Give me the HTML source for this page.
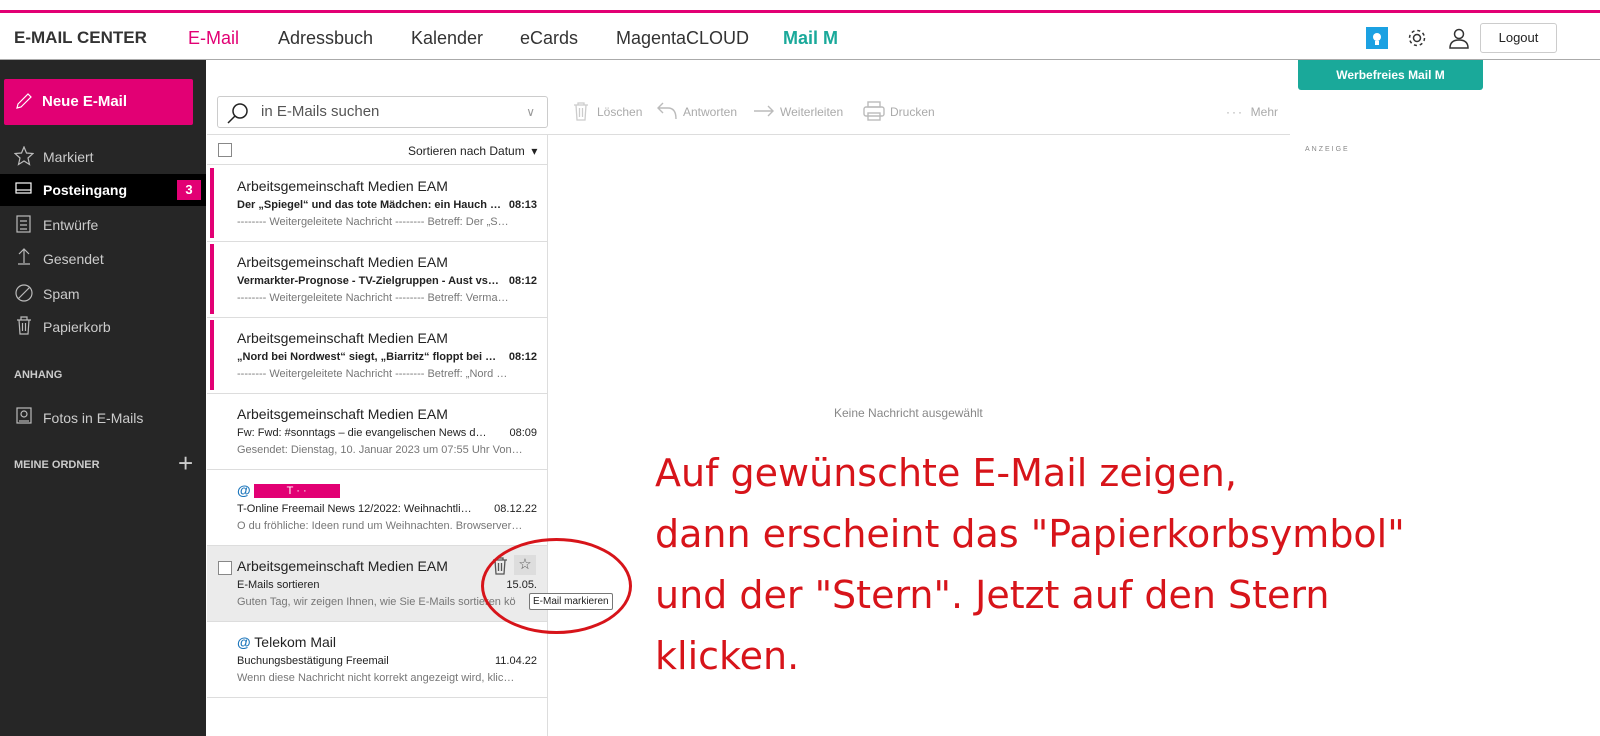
<!DOCTYPE html>
<html><head><meta charset="utf-8"><style>
*{margin:0;padding:0;box-sizing:border-box}
body{width:1600px;height:736px;overflow:hidden;background:#fff;font-family:"Liberation Sans",sans-serif;position:relative;color:#222}
.abs{position:absolute}
.nav{top:28px;font-size:18px;color:#333}
.side{left:0;top:60px;width:206px;height:676px;background:#262626}
.si{position:absolute;left:0;width:206px;height:32px;color:#ccc;font-size:14px;line-height:32px;padding-left:43px}
.mail{position:absolute;left:207px;width:340px;border-bottom:1px solid #ddd;height:76px}
.mail .f{position:absolute;left:30px;top:12px;font-size:14px}
.mail .s{position:absolute;left:30px;top:33px;font-size:11px;width:274px;white-space:nowrap;overflow:hidden}
.mail .t{position:absolute;right:10px;top:33px;font-size:11px}
.mail .p{position:absolute;left:30px;top:50px;font-size:11px;color:#777;white-space:nowrap;width:304px;overflow:hidden}
.bar{position:absolute;left:3px;top:2px;width:4px;height:70px;background:#e20074}
.tb{top:105px;font-size:12px;color:#aaa}
.big{left:655px;font-size:38px;color:#d7141a;line-height:61px;font-family:"DejaVu Sans","Liberation Sans",sans-serif}
</style></head><body>
<div class="abs" style="left:0;top:10px;width:1600px;height:3px;background:#e20074"></div>
<div class="abs" style="left:0;top:59px;width:1600px;height:1px;background:#aaa"></div>
<div class="abs nav" style="left:14px;font-weight:bold;font-size:17px;color:#333">E-MAIL CENTER</div>
<div class="abs nav" style="left:188px;color:#e20074">E-Mail</div>
<div class="abs nav" style="left:278px">Adressbuch</div>
<div class="abs nav" style="left:411px">Kalender</div>
<div class="abs nav" style="left:520px">eCards</div>
<div class="abs nav" style="left:616px">MagentaCLOUD</div>
<div class="abs nav" style="left:783px;color:#1aa99a;font-weight:bold">Mail M</div>
<div class="abs" style="left:1366px;top:27px;width:22px;height:22px;background:#1ba1e2"><svg width="22" height="22"><circle cx="11" cy="10" r="4" fill="#fff"/><rect x="9" y="14" width="4" height="4" fill="#fff"/></svg></div>
<svg class="abs" style="left:1406px;top:27px" width="22" height="22" fill="none" stroke="#333" stroke-width="1.5"><circle cx="11" cy="11" r="3.5"/><circle cx="11" cy="11" r="7.5" stroke-dasharray="3 2.9"/></svg>
<svg class="abs" style="left:1448px;top:27px" width="22" height="22" fill="none" stroke="#333" stroke-width="1.5"><circle cx="11" cy="7" r="4.5"/><path d="M2 21 Q2 13 11 13 Q20 13 20 21 Z"/></svg>
<div class="abs" style="left:1480px;top:23px;width:77px;height:30px;border:1px solid #ccc;border-radius:3px;font-size:13px;text-align:center;line-height:28px">Logout</div>
<div class="abs" style="left:1298px;top:60px;width:185px;height:30px;background:#1aa99a;color:#fff;font-size:12px;font-weight:bold;text-align:center;line-height:30px;border-radius:0 0 3px 3px">Werbefreies Mail M</div>
<div class="abs" style="left:1305px;top:146px;font-size:7px;color:#888;letter-spacing:2px">ANZEIGE</div>

<div class="abs side"></div>
<div class="abs" style="left:4px;top:79px;width:189px;height:46px;background:#e20074;border-radius:2px;color:#fff;font-weight:bold;font-size:15px;line-height:46px;padding-left:38px">Neue E-Mail</div>
<svg class="abs" style="left:16px;top:93px" width="16" height="16" fill="none" stroke="#fff" stroke-width="1.2"><path d="M1 15 L2 11 L12 1 L15 4 L5 14 Z"/></svg>
<div class="si" style="top:141px">Markiert</div>
<div class="si" style="top:174px;background:#000;color:#fff;font-weight:bold">Posteingang<span style="position:absolute;left:177px;top:6px;width:24px;height:20px;background:#e20074;line-height:20px;text-align:center;font-size:13px">3</span></div>
<div class="si" style="top:209px">Entwürfe</div>
<div class="si" style="top:243px">Gesendet</div>
<div class="si" style="top:278px">Spam</div>
<div class="si" style="top:311px">Papierkorb</div>
<div class="si" style="top:359px;padding-left:14px;font-size:11px;font-weight:bold">ANHANG</div>
<div class="si" style="top:402px">Fotos in E-Mails</div>
<div class="si" style="top:449px;padding-left:14px;font-size:11px;font-weight:bold">MEINE ORDNER<span style="position:absolute;left:178px;top:-2px;font-size:26px;font-weight:normal;color:#ccc">+</span></div>
<svg class="abs" style="left:14px;top:146px" width="20" height="290" fill="none" stroke="#bbb" stroke-width="1.2"><path d="M10 1 L12.5 7 L19 7.5 L14 12 L15.5 18.5 L10 15 L4.5 18.5 L6 12 L1 7.5 L7.5 7 Z"/><rect x="2" y="37" width="15" height="10" stroke="#fff"/><path d="M2 44 H17" stroke="#fff"/><rect x="3" y="70" width="13" height="16"/><path d="M6 75 H13 M6 79 H13 M6 83 H13"/><path d="M10 103 V117 M5 108 L10 103 L15 108 M4 118 H16"/><circle cx="10" cy="147" r="8"/><path d="M4 153 L16 141"/><path d="M3 174 H17 M7 174 V171 H13 V174"/><path d="M5 174 L6 188 H14 L15 174 M8.5 177 V185 M11.5 177 V185"/><rect x="3" y="262" width="14" height="15"/><circle cx="10" cy="268" r="3"/><path d="M5 275 H15"/></svg>

<div class="abs" style="left:547px;top:135px;width:1px;height:601px;background:#ddd"></div>
<div class="abs" style="left:217px;top:96px;width:331px;height:32px;border:1px solid #ccc;border-radius:3px;font-size:15px;color:#555;line-height:30px;padding-left:43px">in E-Mails suchen<span style="position:absolute;right:12px;color:#999;font-size:12px">∨</span></div>
<svg class="abs" style="left:226px;top:102px" width="24" height="22" fill="none" stroke="#222" stroke-width="1.5"><circle cx="14" cy="9" r="7"/><path d="M9 14 L2 21"/></svg>
<div class="abs tb" style="left:597px">Löschen</div>
<div class="abs tb" style="left:683px">Antworten</div>
<div class="abs tb" style="left:780px">Weiterleiten</div>
<div class="abs tb" style="left:890px">Drucken</div>
<div class="abs tb" style="left:1226px"><span style="letter-spacing:2px">···</span>&nbsp; Mehr</div>
<svg class="abs" style="left:572px;top:101px" width="18" height="20" fill="none" stroke="#ccc" stroke-width="1.3"><path d="M2 4 H16 M6 4 V2 H12 V4 M4 4 L5 19 H13 L14 4 M7.5 7 V16 M10.5 7 V16"/></svg>
<svg class="abs" style="left:656px;top:101px" width="22" height="20" fill="none" stroke="#bbb" stroke-width="1.4"><path d="M7 2 L2 7 L7 12 M2 7 H12 Q20 7 20 18"/></svg>
<svg class="abs" style="left:753px;top:104px" width="22" height="14" fill="none" stroke="#bbb" stroke-width="1.4"><path d="M1 7 H20 M15 2 L20 7 L15 12"/></svg>
<svg class="abs" style="left:863px;top:101px" width="22" height="20" fill="none" stroke="#bbb" stroke-width="1.4"><rect x="5" y="1" width="12" height="5"/><rect x="1" y="6" width="20" height="9" rx="2"/><rect x="5" y="12" width="12" height="7"/></svg>
<div class="abs" style="left:207px;top:134px;width:1083px;height:1px;background:#ddd"></div>
<div class="abs" style="left:218px;top:143px;width:14px;height:14px;border:1px solid #888"></div>
<div class="abs" style="left:408px;top:144px;font-size:12px">Sortieren nach Datum &nbsp;▾</div>
<div class="abs" style="left:207px;top:164px;width:340px;height:1px;background:#ddd"></div>

<div class="mail" style="top:166px"><div class="bar"></div><div class="f">Arbeitsgemeinschaft Medien EAM</div><div class="s"><b>Der „Spiegel“ und das tote Mädchen: ein Hauch …</b></div><div class="t"><b>08:13</b></div><div class="p">-------- Weitergeleitete Nachricht -------- Betreff: Der „S…</div></div>
<div class="mail" style="top:242px"><div class="bar"></div><div class="f">Arbeitsgemeinschaft Medien EAM</div><div class="s"><b>Vermarkter-Prognose - TV-Zielgruppen - Aust vs…</b></div><div class="t"><b>08:12</b></div><div class="p">-------- Weitergeleitete Nachricht -------- Betreff: Verma…</div></div>
<div class="mail" style="top:318px"><div class="bar"></div><div class="f">Arbeitsgemeinschaft Medien EAM</div><div class="s"><b>„Nord bei Nordwest“ siegt, „Biarritz“ floppt bei …</b></div><div class="t"><b>08:12</b></div><div class="p">-------- Weitergeleitete Nachricht -------- Betreff: „Nord …</div></div>
<div class="mail" style="top:394px"><div class="f">Arbeitsgemeinschaft Medien EAM</div><div class="s">Fw: Fwd: #sonntags – die evangelischen News d…</div><div class="t">08:09</div><div class="p">Gesendet: Dienstag, 10. Januar 2023 um 07:55 Uhr Von…</div></div>
<div class="mail" style="top:470px"><div class="f"><span style="color:#1b75bb;font-weight:bold">@</span><span style="display:inline-block;width:86px;height:14px;background:#e20074;vertical-align:middle;margin-left:3px;color:#fff;font-size:11px;text-align:center;line-height:14px">T · ·</span></div><div class="s">T-Online Freemail News 12/2022: Weihnachtli…</div><div class="t">08.12.22</div><div class="p">O du fröhliche: Ideen rund um Weihnachten. Browserver…</div></div>
<div class="mail" style="top:546px;background:#ebebeb"><div style="position:absolute;left:11px;top:15px;width:14px;height:14px;border:1px solid #888;background:#fff"></div><div class="f">Arbeitsgemeinschaft Medien EAM</div><div class="s">E-Mails sortieren</div><div class="t">15.05.</div><div class="p">Guten Tag, wir zeigen Ihnen, wie Sie E-Mails sortieren kö</div>
<svg style="position:absolute;left:285px;top:11px" width="16" height="18" fill="none" stroke="#555" stroke-width="1.3"><path d="M1 3 H15 M5 3 V1 H11 V3 M3 3 L4 17 H12 L13 3 M6.5 6 V14 M9.5 6 V14"/></svg><div style="position:absolute;left:307px;top:9px;width:22px;height:20px;background:#ddd;text-align:center;font-size:15px;color:#555">☆</div></div>
<div class="mail" style="top:622px"><div class="f"><span style="color:#1b75bb;font-weight:bold">@</span> Telekom Mail</div><div class="s">Buchungsbestätigung Freemail</div><div class="t">11.04.22</div><div class="p">Wenn diese Nachricht nicht korrekt angezeigt wird, klic…</div></div>
<div class="abs" style="left:529px;top:593px;border:1px solid #777;background:#fff;font-size:10px;padding:2px 3px;border-radius:2px">E-Mail markieren</div>
<div class="abs" style="left:481px;top:538px;width:151px;height:96px;border:3px solid #d7141a;border-radius:50%"></div>

<div class="abs" style="left:834px;top:406px;font-size:12px;color:#888">Keine Nachricht ausgewählt</div>
<div class="abs big" style="top:443px">Auf gewünschte E-Mail zeigen,<br>dann erscheint das "Papierkorbsymbol"<br>und der "Stern". Jetzt auf den Stern<br>klicken.</div>
</body></html>
